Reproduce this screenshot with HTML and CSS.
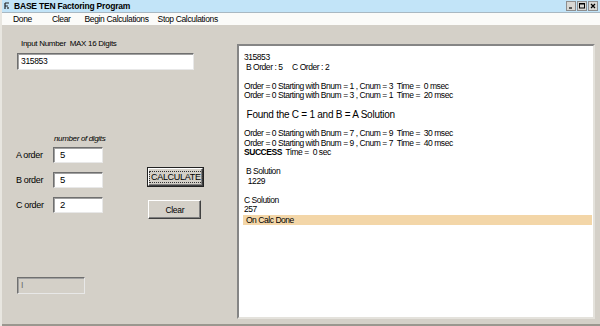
FILE: index.html
```html
<!DOCTYPE html>
<html lang="en">

<head>
    <meta charset="UTF-8">
    <meta name="viewport" content="width=device-width, initial-scale=1.0">
    <title>BASE TEN Factoring Program</title>
    <link rel="stylesheet" href="styles.css">
</head>

<body>
    <div class="window">
        <div class="titlebar">
            <svg class="app-icon" width="6" height="8" viewBox="0 0 6 8">
                <path d="M1 1h4M1 1v6M1 4h3M4 5v2" stroke="#222" stroke-width="1.2" fill="none" />
            </svg>
            <span class="title">BASE TEN Factoring Program</span>
            <div class="caption-buttons">
                <span class="cap-btn"><svg width="8" height="8" viewBox="0 0 8 8"><path d="M2 6h3" stroke="#000" stroke-width="1.2" /></svg></span>
                <span class="cap-btn"><svg width="8" height="8" viewBox="0 0 8 8"><rect x="1.5" y="1.5" width="5" height="4.5" stroke="#000" fill="none" /><path d="M1.5 2h5" stroke="#000" /></svg></span>
                <span class="cap-btn"><svg width="8" height="8" viewBox="0 0 8 8"><path d="M2 2l4 4M6 2l-4 4" stroke="#000" stroke-width="1.2" /></svg></span>
            </div>
        </div>

        <ul class="menubar">
            <li>Done</li>
            <li>Clear</li>
            <li>Begin Calculations</li>
            <li>Stop Calculations</li>
        </ul>

        <div class="client">
            <div class="left-panel">
                <label class="input-label">Input Number&nbsp; MAX 16 Digits</label>
                <div class="field number-field">315853</div>

                <div class="orders">
                    <div class="order-rows">
                        <div class="digits-label">number of digits</div>
                        <div class="order-row"><span class="order-name">A order</span><span class="field small-field">5</span></div>
                        <div class="order-row"><span class="order-name">B order</span><span class="field small-field">5</span></div>
                        <div class="order-row"><span class="order-name">C order</span><span class="field small-field">2</span></div>
                    </div>
                    <div class="buttons">
                        <button class="btn btn-default"><span>CALCULATE</span></button>
                        <button class="btn">Clear</button>
                    </div>
                </div>

                <div class="field status-field">I</div>
            </div>

            <div class="listbox">
                <div class="line">315853</div>
                <div class="line"> B Order : 5     C Order : 2</div>
                <div class="line"> </div>
                <div class="line">Order = 0 Starting with Bnum = 1 , Cnum = 3  Time =  0 msec</div>
                <div class="line">Order = 0 Starting with Bnum = 3 , Cnum = 1  Time =  20 msec</div>
                <div class="line"> </div>
                <div class="line found"> Found the C = 1 and B = A Solution</div>
                <div class="line"> </div>
                <div class="line">Order = 0 Starting with Bnum = 7 , Cnum = 9  Time =  30 msec</div>
                <div class="line">Order = 0 Starting with Bnum = 9 , Cnum = 7  Time =  40 msec</div>
                <div class="line"><b>SUCCESS</b>  Time =  0 sec</div>
                <div class="line"> </div>
                <div class="line"> B Solution</div>
                <div class="line">  1229</div>
                <div class="line"> </div>
                <div class="line">C Solution</div>
                <div class="line">257</div>
                <div class="line selected"> On Calc Done</div>
            </div>
        </div>
    </div>
</body>

</html>
```

FILE: styles.css
```css
html,
body {
    margin: 0;
    padding: 0;
}

body {
    width: 600px;
    height: 326px;
    overflow: hidden;
    font-family: "Liberation Sans", Arial, sans-serif;
    font-size: 9px;
    color: #000;
    background: #d4d0c8;
}

.window {
    display: flex;
    flex-direction: column;
    width: 600px;
    height: 326px;
    background: #d4d0c8;
    border-left: 2px solid #e8e6e0;
    box-sizing: border-box;
}

.titlebar {
    display: flex;
    align-items: center;
    height: 13px;
    padding-left: 2px;
    background: #c2e4f8;
    border-bottom: 1px solid #a9b8c2;
    box-sizing: border-box;
}

.app-icon {
    margin-right: 4px;
}

.title {
    font-weight: bold;
    font-size: 8.5px;
    letter-spacing: -0.2px;
}

.caption-buttons {
    display: flex;
    gap: 1px;
    margin-left: auto;
    margin-right: 2px;
}

.cap-btn {
    display: flex;
    width: 8px;
    height: 8px;
    background: #d8d8d4;
    border: 1px solid #8e8e8e;
}

.menubar {
    display: flex;
    margin: 0;
    padding: 0 0 0 11px;
    height: 12px;
    align-items: center;
    background: #fbfbf9;
    list-style: none;
    font-size: 8.5px;
    letter-spacing: -0.35px;
}

.menubar li:nth-child(1) {
    margin-right: 20px;
}

.menubar li:nth-child(2) {
    margin-right: 14px;
}

.menubar li:nth-child(3) {
    margin-right: 9px;
}

.client {
    display: flex;
    flex: 1;
    padding: 14px 5px 5px 0;
    border-bottom: 2px solid #9a978f;
}

.left-panel {
    display: flex;
    flex-direction: column;
    width: 235px;
    padding-left: 15px;
    box-sizing: border-box;
    font-size: 8.5px;
    letter-spacing: -0.35px;
}

.field {
    display: block;
    background: #fff;
    border-top: 1px solid #6f6f6f;
    border-left: 1px solid #6f6f6f;
    border-right: 1px solid #e8e8e8;
    border-bottom: 1px solid #e8e8e8;
    box-shadow: inset 1px 1px 0 #a0a0a0;
    box-sizing: border-box;
    padding-left: 3px;
}

.input-label {
    margin-left: 4px;
    height: 10px;
    line-height: 10px;
    font-size: 8px;
    letter-spacing: -0.3px;
}

.number-field {
    width: 177px;
    height: 17px;
    margin-top: 4px;
    line-height: 15px;
}

.orders {
    display: flex;
    margin-top: 64px;
}

.order-rows {
    display: flex;
    flex-direction: column;
    gap: 9px;
}

.digits-label {
    height: 10px;
    margin-left: 37px;
    margin-bottom: -6px;
    font-style: italic;
    font-size: 8px;
    line-height: 10px;
}

.order-row {
    display: flex;
    align-items: center;
    height: 16px;
}

.order-name {
    width: 37px;
    margin-left: -1px;
    font-size: 9px;
}

.small-field {
    width: 50px;
    height: 16px;
    line-height: 14px;
    padding-left: 6px;
    font-size: 9.5px;
}

.buttons {
    display: flex;
    flex-direction: column;
    margin-left: 43px;
    padding-top: 34px;
    gap: 14px;
}

.btn {
    display: flex;
    align-items: center;
    justify-content: center;
    width: 53px;
    height: 19px;
    padding: 0;
    font-family: inherit;
    font-size: 8.5px;
    letter-spacing: -0.3px;
    background: #d4d0c8;
    border-top: 1px solid #fff;
    border-left: 1px solid #fff;
    border-right: 1px solid #404040;
    border-bottom: 1px solid #404040;
    box-shadow: inset -1px -1px 0 #808080;
}

.btn-default {
    width: 55px;
    height: 18px;
    outline: 1px solid #222;
    font-size: 9px;
}

.btn-default span {
    padding: 0 1px;
    outline: 1px dotted #333;
    letter-spacing: -0.3px;
}

.status-field {
    width: 68px;
    height: 17px;
    margin-top: 58px;
    background: transparent;
    line-height: 15px;
    color: #666;
}

.listbox {
    flex: 1;
    margin-top: 5px;
    padding: 7px 1px 0 5px;
    background: #fff;
    border-top: 2px solid #858585;
    border-left: 2px solid #858585;
    border-right: 2px solid #e4e2dc;
    border-bottom: 2px solid #e4e2dc;
    box-sizing: border-box;
    font-size: 8.5px;
    letter-spacing: -0.45px;
}

.line {
    height: 9.5px;
    line-height: 9.5px;
    white-space: pre;
}

.found {
    font-size: 10px;
    letter-spacing: -0.25px;
}

.selected {
    height: 10px;
    line-height: 10px;
    margin-left: -1px;
    padding-left: 1px;
    background: #f3d6a8;
}
```
